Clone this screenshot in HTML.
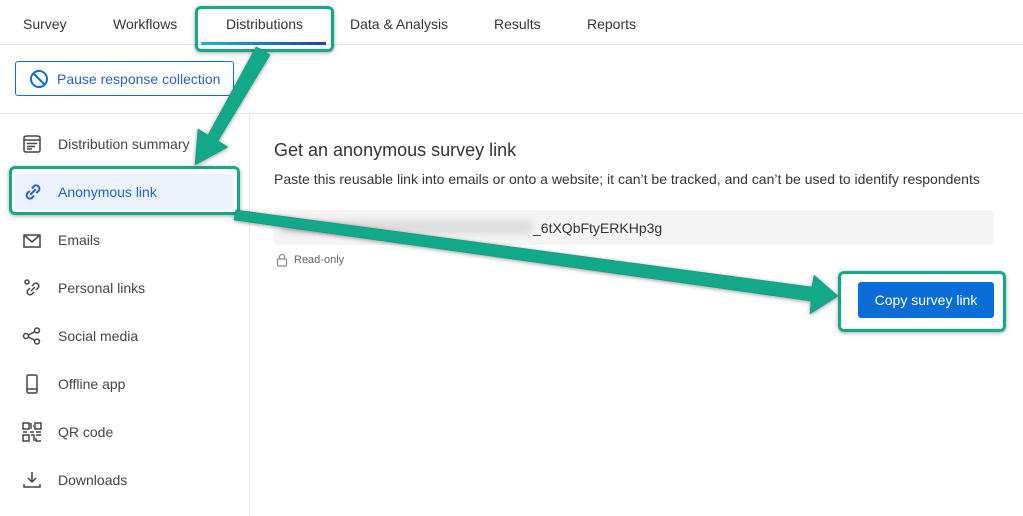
<!DOCTYPE html>
<html><head><style>
body{margin:0;width:1023px;height:516px;overflow:hidden;background:#fff;font-family:"Liberation Sans",sans-serif;color:#333;position:relative}
.a{position:absolute}
.nav{font-size:14px;color:#333;top:16px}
.item{position:absolute;left:58px;font-size:14px;color:#444}
.ic{position:absolute;left:22px}
.gb{position:absolute;border:3px solid #12a98a;border-radius:6px;box-shadow:0 1px 4px rgba(0,0,0,.35)}
</style></head><body>
<div class="a" style="left:0;top:44px;width:1023px;height:1px;background:#e6e6e6"></div>
<div class="a nav" style="left:23px">Survey</div>
<div class="a nav" style="left:113px">Workflows</div>
<div class="a nav" style="left:226px">Distributions</div>
<div class="a nav" style="left:350px">Data &amp; Analysis</div>
<div class="a nav" style="left:494px">Results</div>
<div class="a nav" style="left:587px">Reports</div>
<div class="a" style="left:201px;top:42px;width:125px;height:3px;background:linear-gradient(90deg,#16b8d6,#1c3fb0)"></div>
<div class="gb" style="left:195px;top:6px;width:133px;height:40px"></div>

<div class="a" style="left:15px;top:61px;width:217px;height:33px;border:1px solid #0b6ed8;border-radius:3px"></div>
<svg class="a" style="left:29px;top:69px" width="20" height="20" viewBox="0 0 20 20"><circle cx="10" cy="10" r="8" fill="none" stroke="#0b6ed8" stroke-width="2"/><line x1="4.5" y1="4.5" x2="15.5" y2="15.5" stroke="#0b6ed8" stroke-width="2"/></svg>
<div class="a" style="left:57px;top:71px;font-size:14px;color:#2a5fc4">Pause response collection</div>
<div class="a" style="left:0;top:113px;width:1023px;height:1px;background:#e6e6e6"></div>
<div class="a" style="left:249px;top:113px;width:1px;height:403px;background:#e6e6e6"></div>

<div class="a" style="left:15px;top:174px;width:218px;height:36px;background:#eaf2fb;border-radius:3px"></div>
<div class="gb" style="left:9px;top:166px;width:225px;height:43px"></div>

<svg class="ic" style="top:134px" width="20" height="20" viewBox="0 0 20 20" fill="none" stroke="#444" stroke-width="1.5"><rect x="2" y="2" width="16" height="16" rx="2"/><line x1="2" y1="6" x2="18" y2="6"/><line x1="5" y1="9.5" x2="15" y2="9.5"/><line x1="5" y1="12.5" x2="13" y2="12.5"/><line x1="5" y1="15" x2="10" y2="15"/></svg>
<div class="item" style="top:136px">Distribution summary</div>
<svg class="ic" style="top:181px" width="22" height="22" viewBox="0 0 20 20" fill="none" stroke="#2a5fc4" stroke-width="1.8"><path d="M7.5 12.5l5-5M7 9l-2.2 2.2a3 3 0 004.2 4.2L11 13.2M13 11l2.2-2.2a3 3 0 00-4.2-4.2L9 6.8"/></svg>
<div class="item" style="top:184px;color:#2a5fc4">Anonymous link</div>
<svg class="ic" style="top:231px" width="20" height="20" viewBox="0 0 20 20" fill="none" stroke="#444" stroke-width="1.5"><rect x="2" y="4" width="16" height="12"/><path d="M2 4l8 7 8-7"/></svg>
<div class="item" style="top:232px">Emails</div>
<svg class="ic" style="top:278px" width="20" height="20" viewBox="0 0 20 20" fill="none" stroke="#444" stroke-width="1.5"><circle cx="5" cy="4" r="2"/><path d="M9 13l4-4M8 10l-2 2a2.8 2.8 0 004 4l2-2M14 12l2-2a2.8 2.8 0 00-4-4l-2 2"/></svg>
<div class="item" style="top:280px">Personal links</div>
<svg class="ic" style="top:326px" width="20" height="20" viewBox="0 0 20 20" fill="none" stroke="#444" stroke-width="1.5"><circle cx="4" cy="10" r="2.5"/><circle cx="15" cy="4.5" r="2.5"/><circle cx="15" cy="15.5" r="2.5"/><path d="M6.3 9l6.5-3.3M6.3 11l6.5 3.3"/></svg>
<div class="item" style="top:328px">Social media</div>
<svg class="ic" style="top:374px" width="20" height="20" viewBox="0 0 20 20" fill="none" stroke="#444" stroke-width="1.5"><rect x="5" y="1" width="10" height="18" rx="1.5"/><line x1="5" y1="15" x2="15" y2="15"/></svg>
<div class="item" style="top:376px">Offline app</div>
<svg class="ic" style="top:422px" width="20" height="20" viewBox="0 0 20 20" fill="none" stroke="#444" stroke-width="1.5"><rect x="1" y="1" width="6" height="6"/><rect x="13" y="1" width="6" height="6"/><rect x="1" y="13" width="6" height="6"/><path d="M9 1v6M11 4h1M1 10h4M8 10h4M14 10h5M9 13h3v6M14 13h5M14 16v3h5"/></svg>
<div class="item" style="top:424px">QR code</div>
<svg class="ic" style="top:470px" width="20" height="20" viewBox="0 0 20 20" fill="none" stroke="#444" stroke-width="1.5"><path d="M10 2v10M6 8l4 4 4-4M2 14v3h16v-3"/></svg>
<div class="item" style="top:472px">Downloads</div>

<div class="a" style="left:274px;top:140px;font-size:18px;color:#333">Get an anonymous survey link</div>
<div class="a" style="left:274px;top:171px;font-size:14px;color:#333">Paste this reusable link into emails or onto a website; it can’t be tracked, and can’t be used to identify respondents</div>
<div class="a" style="left:274px;top:210px;width:720px;height:35px;background:#f4f4f4;border-radius:4px"></div>
<div class="a" style="left:282px;top:220px;width:250px;height:14px;background:#ddd;filter:blur(3px)"></div>
<div class="a" style="left:533px;top:220px;font-size:14px;color:#333">_6tXQbFtyERKHp3g</div>
<svg class="a" style="left:276px;top:253px" width="12" height="14" viewBox="0 0 12 14" fill="none" stroke="#888" stroke-width="1.2"><rect x="1.5" y="6" width="9" height="7" rx="1"/><path d="M3.5 6V4a2.5 2.5 0 015 0v2"/></svg>
<div class="a" style="left:294px;top:254px;font-size:11px;color:#666">Read-only</div>

<div class="a" style="left:858px;top:282px;width:136px;height:36px;background:#0b6ed8;border-radius:3px;color:#fff;font-size:14px;line-height:36px;text-align:center">Copy survey link</div>
<div class="gb" style="left:838px;top:271px;width:162px;height:55px"></div>

<svg class="a" style="left:0;top:0" width="1023" height="516">
<g fill="#12a98a" stroke="#0d8f74" stroke-width="0.5" style="filter:drop-shadow(0 1px 2px rgba(0,0,0,.4))">
<polygon points="263,50 270,55 218,141 228,147 195,165 198,129 208,135 256,47"/>
<polygon points="236,210 812,287 814,275 838,296 810,314 811,301 234,220"/>
</g>
</svg>
</body></html>
